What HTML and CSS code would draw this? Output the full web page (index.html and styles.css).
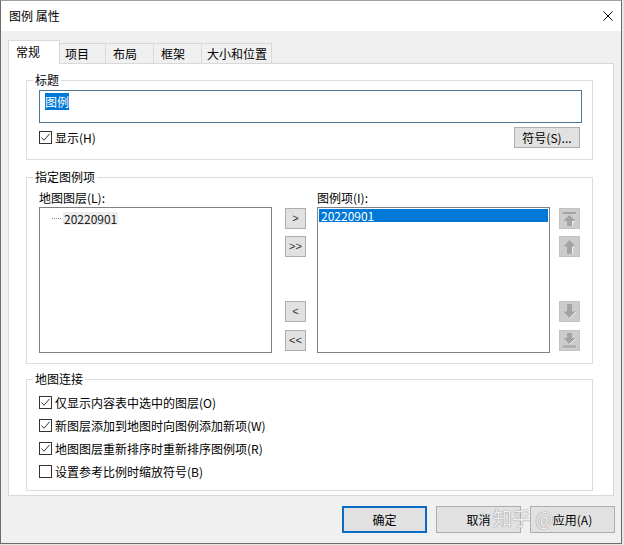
FILE: index.html
```html
<!DOCTYPE html>
<html lang="zh-CN">
<head>
  <meta charset="UTF-8" />
  <title>图例 属性</title>
  <link rel="stylesheet" href="styles.css">
</head>
<body>

  <div class="window">
    <div class="titlebar">
      <span class="title">图例 属性</span>
      <svg class="close" width="10" height="10" viewBox="0 0 10 10"><path d="M0.5 0.5 L9.5 9.5 M9.5 0.5 L0.5 9.5" stroke="#000" stroke-width="1" fill="none"/></svg>
    </div>

    <div class="content">
      <div class="tabs">
        <div class="tab tab-general active">常规</div>
        <div class="tab tab-items">项目</div>
        <div class="tab tab-layout">布局</div>
        <div class="tab tab-frame">框架</div>
        <div class="tab tab-size">大小和位置</div>
      </div>

      <div class="panel">
        <!-- 标题 -->
        <fieldset class="group group-title">
          <legend>标题</legend>
          <div class="textbox"><span class="selected-text">图例</span></div>
          <div class="title-row">
            <label class="check">
              <svg class="box" width="13" height="13" viewBox="0 0 13 13"><rect x="0.5" y="0.5" width="12" height="12" fill="#fff" stroke="#333"/><path d="M2.5 6.5 L5 9.2 L10.6 2.8" stroke="#333" fill="none"/></svg>
              显示(H)
            </label>
            <button class="btn btn-symbol">符号(S)...</button>
          </div>
        </fieldset>

        <!-- 指定图例项 -->
        <fieldset class="group group-items">
          <legend>指定图例项</legend>
          <div class="items-grid">
            <div class="list-label">地图图层(L):</div>
            <div></div>
            <div class="list-label">图例项(I):</div>
            <div></div>

            <div class="listbox">
              <div class="tree-item"><span class="tree-dots"></span><span class="tree-text">20220901</span></div>
            </div>
            <div class="move-buttons">
              <button class="btn btn-small">&gt;</button>
              <button class="btn btn-small">&gt;&gt;</button>
              <button class="btn btn-small btn-gap">&lt;</button>
              <button class="btn btn-small">&lt;&lt;</button>
            </div>
            <div class="listbox">
              <div class="list-item selected">20220901</div>
            </div>
            <div class="move-buttons">
              <button class="btn btn-small btn-disabled">
                <svg width="19" height="19" viewBox="0 0 19 19"><rect x="3" y="3" width="13" height="2" fill="#a3a3a3"/><path d="M9.5 6 L15.5 12 H12 V17 H7 V12 H3.5 Z" fill="#a3a3a3"/><path d="M12.5 17 V12.5 H15" stroke="#f2f2f2" fill="none"/></svg>
              </button>
              <button class="btn btn-small btn-disabled">
                <svg width="19" height="19" viewBox="0 0 19 19"><path d="M9.5 3 L15.5 9.5 H12 V17 H7 V9.5 H3.5 Z" fill="#a3a3a3"/><path d="M12.5 17 V10 H15" stroke="#f2f2f2" fill="none"/></svg>
              </button>
              <button class="btn btn-small btn-disabled btn-gap">
                <svg width="19" height="19" viewBox="0 0 19 19"><path d="M9.5 16 L15.5 9.5 H12 V2 H7 V9.5 H3.5 Z" fill="#a3a3a3"/><path d="M15.5 10 L10 16" stroke="#f2f2f2" fill="none"/></svg>
              </button>
              <button class="btn btn-small btn-disabled">
                <svg width="19" height="19" viewBox="0 0 19 19"><path d="M9.5 13 L15.5 7 H12 V2 H7 V7 H3.5 Z" fill="#a3a3a3"/><rect x="3" y="14.5" width="13" height="2" fill="#a3a3a3"/><path d="M15.5 7.5 L10 13" stroke="#f2f2f2" fill="none"/></svg>
              </button>
            </div>
          </div>
        </fieldset>

        <!-- 地图连接 -->
        <fieldset class="group group-link">
          <legend>地图连接</legend>
          <label class="check check-row">
            <svg class="box" width="13" height="13" viewBox="0 0 13 13"><rect x="0.5" y="0.5" width="12" height="12" fill="#fff" stroke="#333"/><path d="M2.5 6.5 L5 9.2 L10.6 2.8" stroke="#333" fill="none"/></svg>
            仅显示内容表中选中的图层(O)
          </label>
          <label class="check check-row">
            <svg class="box" width="13" height="13" viewBox="0 0 13 13"><rect x="0.5" y="0.5" width="12" height="12" fill="#fff" stroke="#333"/><path d="M2.5 6.5 L5 9.2 L10.6 2.8" stroke="#333" fill="none"/></svg>
            新图层添加到地图时向图例添加新项(W)
          </label>
          <label class="check check-row">
            <svg class="box" width="13" height="13" viewBox="0 0 13 13"><rect x="0.5" y="0.5" width="12" height="12" fill="#fff" stroke="#333"/><path d="M2.5 6.5 L5 9.2 L10.6 2.8" stroke="#333" fill="none"/></svg>
            地图图层重新排序时重新排序图例项(R)
          </label>
          <label class="check check-row">
            <svg class="box" width="13" height="13" viewBox="0 0 13 13"><rect x="0.5" y="0.5" width="12" height="12" fill="#fff" stroke="#333"/></svg>
            设置参考比例时缩放符号(B)
          </label>
        </fieldset>
      </div>

      <div class="footer">
        <button class="btn btn-dialog btn-default">确定</button>
        <button class="btn btn-dialog">取消</button>
        <button class="btn btn-dialog">应用(A)</button>
      </div>
    </div>

    <div class="watermark">知乎 @</div>
  </div>

</body>
</html>
```

FILE: styles.css
```css
/* Janela estilo Windows */
body {
  margin: 0;
  background: #e6e6e6;
  font-family: "Noto Sans CJK SC", "Noto Sans", sans-serif;
  font-size: 12px;
  color: #000;
}

.window {
  position: relative;
  width: 622px;
  height: 544px;
  box-sizing: border-box;
  border: 1px solid #6b6b6b;
  border-top-color: #a0a0a0;
  background: #f0f0f0;
  display: flex;
  flex-direction: column;
}

.titlebar {
  height: 30px;
  background: #fff;
  display: flex;
  align-items: center;
  justify-content: space-between;
  padding: 0 8px 0 8px;
  flex-shrink: 0;
}

.title {
  line-height: 16px;
}

.content {
  flex: 1;
  padding: 9px 6px 0 7px;
}

/* Abas */
.tabs {
  display: flex;
  align-items: flex-end;
  height: 24px;
  margin-bottom: -1px;
  position: relative;
  z-index: 1;
}

.tab {
  height: 20px;
  margin-bottom: 1px;
  box-sizing: border-box;
  border: 1px solid #d9d9d9;
  border-bottom: none;
  background: #f0f0f0;
  padding-left: 5px;
  line-height: 19px;
  margin-left: -1px;
}

.tab.active {
  height: 24px;
  margin-bottom: 0;
  background: #fff;
  line-height: 22px;
  padding-left: 7px;
  margin-left: 0;
  position: relative;
  z-index: 2;
}

.tab-general { width: 52px; }
.tab-items { width: 47px; }
.tab-layout { width: 49px; padding-left: 7px; }
.tab-frame { width: 49px; padding-left: 7px; }
.tab-size { width: 71px; }

.panel {
  background: #fff;
  border: 1px solid #d9d9d9;
  margin-right: 1px;
  padding: 0 20px 4px 17px;
}

/* Grupos */
.group {
  margin: 0;
  min-width: 0;
  border: 1px solid #dcdcdc;
  padding: 2px 10px 11px 12px;
}

.group legend {
  padding: 0 2px;
  margin-left: -6px;
  line-height: 16px;
}

.group-title {
  margin-top: 8px;
}

.textbox {
  height: 33px;
  box-sizing: border-box;
  border: 1px solid #4f7591;
  padding: 4px 5px;
  line-height: 13px;
}

.selected-text {
  background: #0078d7;
  color: #fff;
}

.title-row {
  margin-top: 4px;
  height: 21px;
  display: flex;
  align-items: center;
  justify-content: space-between;
}

.check {
  display: flex;
  align-items: center;
  gap: 3px;
}

.box {
  flex-shrink: 0;
}

.btn {
  font-family: inherit;
  font-size: 12px;
  color: #000;
  background: #e1e1e1;
  border: 1px solid #adadad;
  box-sizing: border-box;
  padding: 0;
  margin: 0;
}

.btn-symbol {
  width: 66px;
  height: 21px;
  margin-right: 2px;
}

.group-items {
  margin-top: 9px;
  padding: 5px 10px 10px 12px;
}

/* lista esquerda | botões | lista direita | setas */
.items-grid {
  display: grid;
  grid-template-columns: 233px 45px 233px 30px;
  row-gap: 1px;
}

.items-grid > :nth-child(6) {
  margin-left: 13px;
  margin-right: 11px;
}

.items-grid > :nth-child(8) {
  margin-left: 9px;
}

.list-label {
  line-height: 16px;
}

.listbox {
  height: 146px;
  box-sizing: border-box;
  border: 1px solid #828282;
  background: #fff;
}

.tree-item {
  display: flex;
  align-items: center;
  margin-top: 4px;
  padding-left: 12px;
  height: 13px;
}

.tree-dots {
  width: 9px;
  border-top: 1px dotted #8a8a8a;
  margin-right: 2px;
}

.tree-text {
  background: #ededed;
  padding: 0 1px;
  line-height: 13px;
  color: #222;
}

.list-item {
  margin: 1px 0 0 1px;
  width: 229px;
  height: 13px;
  line-height: 13px;
  padding-left: 2px;
  box-sizing: border-box;
}

.list-item.selected {
  background: #0078d7;
  color: #fff;
}

.move-buttons {
  display: flex;
  flex-direction: column;
  padding-top: 1px;
  gap: 7px;
}

.btn-small {
  width: 21px;
  height: 21px;
  font-family: "Liberation Sans", sans-serif;
  font-size: 11px;
  line-height: 19px;
  display: flex;
  align-items: center;
  justify-content: center;
  color: #333;
}

.btn-gap {
  margin-top: 37px;
}

.move-buttons .btn-gap + .btn {
  margin-top: 1px;
}

.btn-disabled {
  background: #cccccc;
  border-color: #c2c2c2;
}

.group-link {
  margin-top: 7px;
  padding: 4px 10px 7px 12px;
}

.check-row {
  height: 23px;
}

/* Botões do rodapé */
.footer {
  display: flex;
  justify-content: flex-end;
  gap: 9px;
  margin-top: 10px;
}

.btn-dialog {
  width: 85px;
  height: 27px;
}

.btn-default {
  border: 2px solid #0a6cc2;
}

.watermark {
  position: absolute;
  left: 492px;
  top: 505px;
  font-size: 19px;
  line-height: 24px;
  color: rgba(255, 255, 255, 0.9);
  text-shadow: 0 0 1px #8c8c8c, 0 0 1px #8c8c8c;
  pointer-events: none;
}
```
